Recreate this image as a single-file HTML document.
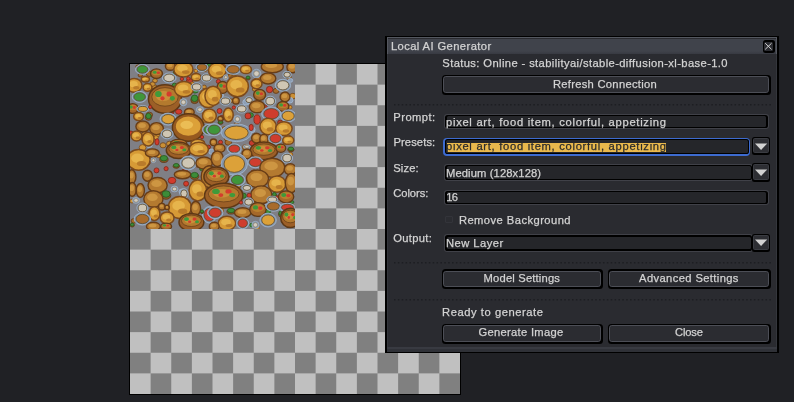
<!DOCTYPE html>
<html lang="en">
<head>
<meta charset="utf-8">
<title>Local AI Generator</title>
<style>
html,body{margin:0;padding:0;}
body{width:794px;height:402px;overflow:hidden;background:#202125;position:relative;font-family:"Liberation Sans","DejaVu Sans",sans-serif;font-size:11.2px;color:#d3d3d3;}
.abs{position:absolute;}
.canvas{left:128.7px;top:62.7px;width:332.6px;height:332.6px;background:#000;}
.checker{left:130px;top:64px;width:330px;height:330px;background-color:#c0c0c0;
 background-image:conic-gradient(#c0c0c0 25%,#808080 0 50%,#c0c0c0 0 75%,#808080 0);background-size:41.25px 41.25px;}
.food{position:absolute;left:130px;top:64px;}
.dlg{left:385.3px;top:36px;width:393.4px;height:317px;background:#000;}
.dlgin{left:386.6px;top:37.3px;width:390.8px;height:314.4px;background:#2a2b30;}
.title{left:386.6px;top:37.3px;width:390.8px;height:16.6px;background:linear-gradient(#40434b 0,#40434b 80%,#383a42 100%);}
.t{filter:grayscale(1);position:absolute;white-space:pre;line-height:14px;height:14px;-webkit-text-stroke:0.25px currentColor;}
.sep{height:1.4px;left:393.5px;width:377.2px;background-image:repeating-linear-gradient(90deg,#1c1d21 0,#1c1d21 1.4px,transparent 1.4px,transparent 3.87px);}
.btn{background:#000;border-radius:3.5px;}
.btn i{position:absolute;left:1.3px;top:1.6px;right:1.3px;bottom:2px;background:#2b2c31;border:1.4px solid #4c4e56;border-radius:2.8px;box-sizing:border-box;}
.btn.dd{border-radius:2.5px}.btn.dd i{left:1.2px;top:1.2px;right:1.2px;bottom:2px;border-radius:1.5px;background:#2d2e33}
.inp{background:#404148;border-radius:3.2px;}
.inp i{position:absolute;left:1.1px;top:1.1px;right:1.1px;bottom:1.1px;background:#000;border-radius:2.6px;}
.inp b{position:absolute;left:2.4px;top:2.4px;right:2.4px;bottom:2.4px;background:#25262a;border-radius:1.5px;}
.inp.focus{background:#3d6bd0;}
</style>
</head>
<body>
<div class="abs canvas"></div>
<div class="abs checker"></div>
<svg class="food" width="165" height="165" viewBox="0 0 165 165">
<rect width="165" height="165" fill="#7f7f85"/>
<ellipse cx="53.4" cy="24.9" rx="2.9" ry="2.5" fill="#c98f36" stroke="#6e431a" stroke-width="0.8"/>
<ellipse cx="135.5" cy="15.5" rx="2.8" ry="2.4" fill="#c63d2e" stroke="#6e2517" stroke-width="0.8"/>
<ellipse cx="35.4" cy="14.2" rx="2.5" ry="2.2" fill="#a56b2b" stroke="#5f3715" stroke-width="0.8"/>
<ellipse cx="15" cy="70" rx="3.2" ry="2.8" fill="#c98f36" stroke="#6e431a" stroke-width="0.8"/>
<ellipse cx="156.3" cy="104.1" rx="2.8" ry="2.4" fill="#c98f36" stroke="#6e431a" stroke-width="0.8"/>
<ellipse cx="95.2" cy="65.5" rx="3.4" ry="3" fill="#c98f36" stroke="#6e431a" stroke-width="0.8"/>
<ellipse cx="91.8" cy="22" rx="2.5" ry="2.2" fill="#c63d2e" stroke="#6e2517" stroke-width="0.8"/>
<ellipse cx="19.4" cy="50.9" rx="3.2" ry="2.7" fill="#a56b2b" stroke="#5f3715" stroke-width="0.8"/>
<ellipse cx="17" cy="94.2" rx="2.1" ry="1.9" fill="#c98f36" stroke="#6e431a" stroke-width="0.8"/>
<ellipse cx="90.4" cy="10.4" rx="1.9" ry="1.7" fill="#a56b2b" stroke="#5f3715" stroke-width="0.8"/>
<ellipse cx="81.9" cy="87.7" rx="3.1" ry="2.7" fill="#8c9db3" stroke="#a3bad4" stroke-width="0.8"/>
<ellipse cx="96.6" cy="74.8" rx="2.3" ry="2" fill="#b07a30" stroke="#6e431a" stroke-width="0.8"/>
<ellipse cx="29.7" cy="128.7" rx="2" ry="1.7" fill="#d69a36" stroke="#7c4a1c" stroke-width="0.8"/>
<ellipse cx="86.7" cy="144.4" rx="3" ry="2.6" fill="#d69a36" stroke="#7c4a1c" stroke-width="0.8"/>
<ellipse cx="100.5" cy="12.1" rx="2.7" ry="2.3" fill="#a56b2b" stroke="#5f3715" stroke-width="0.8"/>
<ellipse cx="124.9" cy="25.1" rx="2.6" ry="2.3" fill="#c98f36" stroke="#6e431a" stroke-width="0.8"/>
<ellipse cx="158.7" cy="12.8" rx="2.7" ry="2.4" fill="#b07a30" stroke="#6e431a" stroke-width="0.8"/>
<ellipse cx="144.5" cy="51.8" rx="3" ry="2.6" fill="#c63d2e" stroke="#6e2517" stroke-width="0.8"/>
<ellipse cx="82" cy="131.5" rx="2" ry="1.7" fill="#c98f36" stroke="#6e431a" stroke-width="0.8"/>
<ellipse cx="155.9" cy="78.2" rx="2.9" ry="2.5" fill="#c98f36" stroke="#6e431a" stroke-width="0.8"/>
<ellipse cx="120.6" cy="51.1" rx="2.8" ry="2.4" fill="#3c8c38" stroke="#27591f" stroke-width="0.8"/>
<ellipse cx="135.6" cy="47" rx="2.5" ry="2.1" fill="#3c8c38" stroke="#27591f" stroke-width="0.8"/>
<ellipse cx="57.3" cy="155.2" rx="2.4" ry="2.1" fill="#c63d2e" stroke="#6e2517" stroke-width="0.8"/>
<ellipse cx="19.3" cy="9.7" rx="3.1" ry="2.7" fill="#a56b2b" stroke="#5f3715" stroke-width="0.8"/>
<ellipse cx="121.8" cy="65.7" rx="3.3" ry="2.9" fill="#8c9db3" stroke="#a3bad4" stroke-width="0.8"/>
<ellipse cx="13.3" cy="74.1" rx="2.7" ry="2.4" fill="#a56b2b" stroke="#5f3715" stroke-width="0.8"/>
<ellipse cx="135.2" cy="142.6" rx="2.3" ry="2" fill="#8c9db3" stroke="#a3bad4" stroke-width="0.8"/>
<ellipse cx="162.8" cy="112.6" rx="2.5" ry="2.1" fill="#a56b2b" stroke="#5f3715" stroke-width="0.8"/>
<ellipse cx="24.9" cy="29.1" rx="2.2" ry="1.9" fill="#a56b2b" stroke="#5f3715" stroke-width="0.8"/>
<ellipse cx="2" cy="137.1" rx="2.1" ry="1.9" fill="#d69a36" stroke="#7c4a1c" stroke-width="0.8"/>
<ellipse cx="0.7" cy="69.1" rx="2.4" ry="2.1" fill="#c63d2e" stroke="#6e2517" stroke-width="0.8"/>
<ellipse cx="52.6" cy="20.7" rx="3.2" ry="2.8" fill="#c63d2e" stroke="#6e2517" stroke-width="0.8"/>
<ellipse cx="108.1" cy="122.1" rx="2.6" ry="2.2" fill="#b07a30" stroke="#6e431a" stroke-width="0.8"/>
<ellipse cx="128.7" cy="144.3" rx="3.1" ry="2.7" fill="#8c9db3" stroke="#a3bad4" stroke-width="0.8"/>
<ellipse cx="65.7" cy="65" rx="2.6" ry="2.3" fill="#8c9db3" stroke="#a3bad4" stroke-width="0.8"/>
<ellipse cx="10.3" cy="11.1" rx="2.2" ry="1.9" fill="#a56b2b" stroke="#5f3715" stroke-width="0.8"/>
<ellipse cx="18.1" cy="99.1" rx="2" ry="1.7" fill="#c63d2e" stroke="#6e2517" stroke-width="0.8"/>
<ellipse cx="25" cy="16.7" rx="2.4" ry="2.1" fill="#c98f36" stroke="#6e431a" stroke-width="0.8"/>
<ellipse cx="11.6" cy="34.3" rx="2.4" ry="2.1" fill="#3c8c38" stroke="#27591f" stroke-width="0.8"/>
<ellipse cx="41.6" cy="57.3" rx="2.4" ry="2.1" fill="#c98f36" stroke="#6e431a" stroke-width="0.8"/>
<ellipse cx="19" cy="80.5" rx="3.4" ry="3" fill="#8c9db3" stroke="#a3bad4" stroke-width="0.8"/>
<ellipse cx="79.8" cy="14.2" rx="2" ry="1.7" fill="#d69a36" stroke="#7c4a1c" stroke-width="0.8"/>
<ellipse cx="122.2" cy="79" rx="3" ry="2.6" fill="#c63d2e" stroke="#6e2517" stroke-width="0.8"/>
<ellipse cx="3.8" cy="156.9" rx="2.7" ry="2.3" fill="#a56b2b" stroke="#5f3715" stroke-width="0.8"/>
<ellipse cx="113.9" cy="150.8" rx="3.1" ry="2.7" fill="#d69a36" stroke="#7c4a1c" stroke-width="0.8"/>
<ellipse cx="161.5" cy="142.4" rx="3" ry="2.6" fill="#d69a36" stroke="#7c4a1c" stroke-width="0.8"/>
<ellipse cx="85.5" cy="149.9" rx="2.4" ry="2.1" fill="#a56b2b" stroke="#5f3715" stroke-width="0.8"/>
<ellipse cx="87.9" cy="128.5" rx="2.4" ry="2.1" fill="#a56b2b" stroke="#5f3715" stroke-width="0.8"/>
<ellipse cx="101.2" cy="130.1" rx="3.1" ry="2.7" fill="#a56b2b" stroke="#5f3715" stroke-width="0.8"/>
<ellipse cx="133" cy="135" rx="3" ry="2.6" fill="#a56b2b" stroke="#5f3715" stroke-width="0.8"/>
<ellipse cx="33" cy="81.3" rx="3" ry="2.6" fill="#c98f36" stroke="#6e431a" stroke-width="0.8"/>
<ellipse cx="130.4" cy="77.9" rx="2.2" ry="1.9" fill="#c63d2e" stroke="#6e2517" stroke-width="0.8"/>
<ellipse cx="157.8" cy="73.8" rx="3.3" ry="2.9" fill="#d69a36" stroke="#7c4a1c" stroke-width="0.8"/>
<ellipse cx="157.6" cy="60.2" rx="2.2" ry="1.9" fill="#a56b2b" stroke="#5f3715" stroke-width="0.8"/>
<ellipse cx="77.6" cy="55.7" rx="2.6" ry="2.3" fill="#c63d2e" stroke="#6e2517" stroke-width="0.8"/>
<ellipse cx="138.7" cy="79.1" rx="2.9" ry="2.5" fill="#b07a30" stroke="#6e431a" stroke-width="0.8"/>
<ellipse cx="106.1" cy="137.7" rx="2" ry="1.8" fill="#8c9db3" stroke="#a3bad4" stroke-width="0.8"/>
<ellipse cx="129.1" cy="123.8" rx="2.6" ry="2.3" fill="#a56b2b" stroke="#5f3715" stroke-width="0.8"/>
<ellipse cx="71.6" cy="104.9" rx="2" ry="1.7" fill="#3c8c38" stroke="#27591f" stroke-width="0.8"/>
<ellipse cx="65.3" cy="66.2" rx="3.4" ry="2.9" fill="#3c8c38" stroke="#27591f" stroke-width="0.8"/>
<ellipse cx="26.2" cy="163.9" rx="1.9" ry="1.6" fill="#c63d2e" stroke="#6e2517" stroke-width="0.8"/>
<ellipse cx="149.3" cy="133.1" rx="2.1" ry="1.8" fill="#b07a30" stroke="#6e431a" stroke-width="0.8"/>
<ellipse cx="98.3" cy="78.3" rx="3.3" ry="2.9" fill="#a56b2b" stroke="#5f3715" stroke-width="0.8"/>
<ellipse cx="90.5" cy="21.6" rx="1.9" ry="1.6" fill="#3c8c38" stroke="#27591f" stroke-width="0.8"/>
<ellipse cx="107.2" cy="86.9" rx="3.3" ry="2.9" fill="#8c9db3" stroke="#a3bad4" stroke-width="0.8"/>
<ellipse cx="162.8" cy="32.1" rx="3.2" ry="2.8" fill="#c98f36" stroke="#6e431a" stroke-width="0.8"/>
<ellipse cx="41.6" cy="48.3" rx="2.2" ry="1.9" fill="#c63d2e" stroke="#6e2517" stroke-width="0.8"/>
<ellipse cx="53.8" cy="89.8" rx="3.2" ry="2.8" fill="#c98f36" stroke="#6e431a" stroke-width="0.8"/>
<ellipse cx="150.2" cy="58.4" rx="2.6" ry="2.2" fill="#c63d2e" stroke="#6e2517" stroke-width="0.8"/>
<ellipse cx="134.5" cy="85.3" rx="3.2" ry="2.8" fill="#c63d2e" stroke="#6e2517" stroke-width="0.8"/>
<ellipse cx="21.6" cy="25.1" rx="2.7" ry="2.3" fill="#b07a30" stroke="#6e431a" stroke-width="0.8"/>
<ellipse cx="72.6" cy="30.2" rx="1.8" ry="1.6" fill="#b07a30" stroke="#6e431a" stroke-width="0.8"/>
<ellipse cx="24.7" cy="23.4" rx="2.8" ry="2.5" fill="#c98f36" stroke="#6e431a" stroke-width="0.8"/>
<ellipse cx="91.8" cy="53.8" rx="2.7" ry="2.3" fill="#c63d2e" stroke="#6e2517" stroke-width="0.8"/>
<ellipse cx="79.6" cy="128.1" rx="3.3" ry="2.8" fill="#c98f36" stroke="#6e431a" stroke-width="0.8"/>
<ellipse cx="41" cy="45.7" rx="3.1" ry="2.7" fill="#c63d2e" stroke="#6e2517" stroke-width="0.8"/>
<ellipse cx="74.6" cy="4.6" rx="3.3" ry="2.9" fill="#c98f36" stroke="#6e431a" stroke-width="0.8"/>
<ellipse cx="73.1" cy="101.1" rx="2.7" ry="2.3" fill="#c63d2e" stroke="#6e2517" stroke-width="0.8"/>
<ellipse cx="32.9" cy="45.7" rx="2.7" ry="2.3" fill="#b07a30" stroke="#6e431a" stroke-width="0.8"/>
<ellipse cx="78.9" cy="155.3" rx="3" ry="2.6" fill="#d69a36" stroke="#7c4a1c" stroke-width="0.8"/>
<ellipse cx="152.3" cy="147.3" rx="2.2" ry="1.9" fill="#8c9db3" stroke="#a3bad4" stroke-width="0.8"/>
<ellipse cx="22.6" cy="20.1" rx="2.6" ry="2.2" fill="#c98f36" stroke="#6e431a" stroke-width="0.8"/>
<ellipse cx="110.7" cy="70.7" rx="2.2" ry="1.9" fill="#d69a36" stroke="#7c4a1c" stroke-width="0.8"/>
<ellipse cx="129.3" cy="148" rx="2.1" ry="1.8" fill="#3c8c38" stroke="#27591f" stroke-width="0.8"/>
<ellipse cx="106.2" cy="60.4" rx="2.2" ry="2" fill="#a56b2b" stroke="#5f3715" stroke-width="0.8"/>
<ellipse cx="159.6" cy="36.2" rx="3.4" ry="2.9" fill="#8c9db3" stroke="#a3bad4" stroke-width="0.8"/>
<ellipse cx="146" cy="26.9" rx="2.9" ry="2.5" fill="#a56b2b" stroke="#5f3715" stroke-width="0.8"/>
<ellipse cx="26.6" cy="71.2" rx="2.7" ry="2.3" fill="#d69a36" stroke="#7c4a1c" stroke-width="0.8"/>
<ellipse cx="69.5" cy="58.8" rx="2" ry="1.7" fill="#d69a36" stroke="#7c4a1c" stroke-width="0.8"/>
<ellipse cx="3.2" cy="91.4" rx="2.5" ry="2.2" fill="#c98f36" stroke="#6e431a" stroke-width="0.8"/>
<ellipse cx="63.4" cy="85.4" rx="2.3" ry="2" fill="#c98f36" stroke="#6e431a" stroke-width="0.8"/>
<ellipse cx="18.6" cy="151.6" rx="2.2" ry="1.9" fill="#c98f36" stroke="#6e431a" stroke-width="0.8"/>
<ellipse cx="13.9" cy="44.9" rx="3.3" ry="2.9" fill="#a56b2b" stroke="#5f3715" stroke-width="0.8"/>
<ellipse cx="44.6" cy="21.4" rx="2.5" ry="2.2" fill="#3c8c38" stroke="#27591f" stroke-width="0.8"/>
<ellipse cx="135.1" cy="42.7" rx="2.1" ry="1.8" fill="#c63d2e" stroke="#6e2517" stroke-width="0.8"/>
<ellipse cx="94.1" cy="115.6" rx="2" ry="1.7" fill="#c98f36" stroke="#6e431a" stroke-width="0.8"/>
<ellipse cx="131.9" cy="30.3" rx="3.3" ry="2.9" fill="#d69a36" stroke="#7c4a1c" stroke-width="0.8"/>
<ellipse cx="154.8" cy="104.7" rx="3.1" ry="2.7" fill="#c98f36" stroke="#6e431a" stroke-width="0.8"/>
<ellipse cx="100.3" cy="36.7" rx="2.3" ry="2" fill="#c98f36" stroke="#6e431a" stroke-width="0.8"/>
<ellipse cx="74.9" cy="56" rx="2.7" ry="2.4" fill="#d69a36" stroke="#7c4a1c" stroke-width="0.8"/>
<ellipse cx="102.6" cy="7.1" rx="3" ry="2.6" fill="#c98f36" stroke="#6e431a" stroke-width="0.8"/>
<ellipse cx="159.9" cy="43.2" rx="2.1" ry="1.9" fill="#d69a36" stroke="#7c4a1c" stroke-width="0.8"/>
<ellipse cx="103.7" cy="87.6" rx="2.2" ry="1.9" fill="#8c9db3" stroke="#a3bad4" stroke-width="0.8"/>
<ellipse cx="82.5" cy="29.4" rx="2.4" ry="2.1" fill="#c98f36" stroke="#6e431a" stroke-width="0.8"/>
<ellipse cx="164.1" cy="6.1" rx="1.9" ry="1.6" fill="#c63d2e" stroke="#6e2517" stroke-width="0.8"/>
<ellipse cx="90.9" cy="31.3" rx="2.6" ry="2.3" fill="#8c9db3" stroke="#a3bad4" stroke-width="0.8"/>
<ellipse cx="17.5" cy="135.1" rx="2.5" ry="2.2" fill="#8c9db3" stroke="#a3bad4" stroke-width="0.8"/>
<ellipse cx="90.1" cy="146.6" rx="3.4" ry="3" fill="#d69a36" stroke="#7c4a1c" stroke-width="0.8"/>
<ellipse cx="113.5" cy="162.1" rx="2.4" ry="2.1" fill="#b07a30" stroke="#6e431a" stroke-width="0.8"/>
<ellipse cx="145.5" cy="120.3" rx="2.1" ry="1.8" fill="#d69a36" stroke="#7c4a1c" stroke-width="0.8"/>
<ellipse cx="162" cy="138.1" rx="1.9" ry="1.6" fill="#3c8c38" stroke="#27591f" stroke-width="0.8"/>
<ellipse cx="122.2" cy="42.2" rx="2.1" ry="1.8" fill="#c98f36" stroke="#6e431a" stroke-width="0.8"/>
<ellipse cx="109.8" cy="62.8" rx="2.7" ry="2.3" fill="#d69a36" stroke="#7c4a1c" stroke-width="0.8"/>
<ellipse cx="98.8" cy="114.3" rx="1.9" ry="1.7" fill="#a56b2b" stroke="#5f3715" stroke-width="0.8"/>
<ellipse cx="26" cy="73.6" rx="2.3" ry="2" fill="#d69a36" stroke="#7c4a1c" stroke-width="0.8"/>
<ellipse cx="160.5" cy="90.3" rx="2.2" ry="1.9" fill="#d69a36" stroke="#7c4a1c" stroke-width="0.8"/>
<ellipse cx="35.9" cy="30.2" rx="2.4" ry="2.1" fill="#c98f36" stroke="#6e431a" stroke-width="0.8"/>
<ellipse cx="78.3" cy="83" rx="2.2" ry="1.9" fill="#c63d2e" stroke="#6e2517" stroke-width="0.8"/>
<ellipse cx="128.1" cy="15" rx="3.2" ry="2.7" fill="#a56b2b" stroke="#5f3715" stroke-width="0.8"/>
<ellipse cx="65.9" cy="6.9" rx="1.9" ry="1.6" fill="#d69a36" stroke="#7c4a1c" stroke-width="0.8"/>
<ellipse cx="103.9" cy="13.9" rx="3.4" ry="2.9" fill="#b07a30" stroke="#6e431a" stroke-width="0.8"/>
<ellipse cx="123.8" cy="108.5" rx="3" ry="2.6" fill="#c63d2e" stroke="#6e2517" stroke-width="0.8"/>
<ellipse cx="64.3" cy="53.8" rx="3.4" ry="3" fill="#a56b2b" stroke="#5f3715" stroke-width="0.8"/>
<ellipse cx="46.9" cy="102.1" rx="2.1" ry="1.8" fill="#b07a30" stroke="#6e431a" stroke-width="0.8"/>
<ellipse cx="137.8" cy="147.2" rx="2.9" ry="2.5" fill="#3c8c38" stroke="#27591f" stroke-width="0.8"/>
<ellipse cx="115.7" cy="83.4" rx="3.3" ry="2.9" fill="#b07a30" stroke="#6e431a" stroke-width="0.8"/>
<ellipse cx="83.2" cy="137.8" rx="3.1" ry="2.7" fill="#b07a30" stroke="#6e431a" stroke-width="0.8"/>
<ellipse cx="113.3" cy="131.7" rx="3" ry="2.6" fill="#3c8c38" stroke="#27591f" stroke-width="0.8"/>
<ellipse cx="106.1" cy="14" rx="1.9" ry="1.7" fill="#3c8c38" stroke="#27591f" stroke-width="0.8"/>
<ellipse cx="59.5" cy="17.3" rx="3.2" ry="2.8" fill="#c63d2e" stroke="#6e2517" stroke-width="0.8"/>
<ellipse cx="8.4" cy="3.1" rx="2.7" ry="2.3" fill="#a56b2b" stroke="#5f3715" stroke-width="0.8"/>
<ellipse cx="80.7" cy="0.5" rx="3.1" ry="2.7" fill="#3c8c38" stroke="#27591f" stroke-width="0.8"/>
<ellipse cx="153.9" cy="148.1" rx="2" ry="1.7" fill="#c63d2e" stroke="#6e2517" stroke-width="0.8"/>
<ellipse cx="10.9" cy="121.6" rx="2.2" ry="2" fill="#c98f36" stroke="#6e431a" stroke-width="0.8"/>
<ellipse cx="139.6" cy="38.7" rx="3.1" ry="2.7" fill="#a56b2b" stroke="#5f3715" stroke-width="0.8"/>
<ellipse cx="122.1" cy="161" rx="2.6" ry="2.3" fill="#8c9db3" stroke="#a3bad4" stroke-width="0.8"/>
<ellipse cx="12.7" cy="150.2" rx="2.3" ry="2" fill="#c98f36" stroke="#6e431a" stroke-width="0.8"/>
<ellipse cx="101.8" cy="106.1" rx="2" ry="1.7" fill="#a56b2b" stroke="#5f3715" stroke-width="0.8"/>
<ellipse cx="54.7" cy="107.5" rx="3" ry="2.6" fill="#c63d2e" stroke="#6e2517" stroke-width="0.8"/>
<ellipse cx="93.7" cy="2.1" rx="1.9" ry="1.7" fill="#d69a36" stroke="#7c4a1c" stroke-width="0.8"/>
<ellipse cx="160.5" cy="16.4" rx="2.2" ry="1.9" fill="#8c9db3" stroke="#a3bad4" stroke-width="0.8"/>
<ellipse cx="48" cy="85.2" rx="2.6" ry="2.3" fill="#8c9db3" stroke="#a3bad4" stroke-width="0.8"/>
<ellipse cx="126.6" cy="163.9" rx="2.7" ry="2.4" fill="#d69a36" stroke="#7c4a1c" stroke-width="0.8"/>
<ellipse cx="161.4" cy="154.5" rx="1.9" ry="1.6" fill="#8c9db3" stroke="#a3bad4" stroke-width="0.8"/>
<ellipse cx="12.6" cy="83.6" rx="3.4" ry="3" fill="#d69a36" stroke="#7c4a1c" stroke-width="0.8"/>
<ellipse cx="63.8" cy="151.2" rx="3.3" ry="2.9" fill="#c98f36" stroke="#6e431a" stroke-width="0.8"/>
<ellipse cx="95.9" cy="23.4" rx="2.7" ry="2.3" fill="#d69a36" stroke="#7c4a1c" stroke-width="0.8"/>
<ellipse cx="21.9" cy="135.3" rx="2.7" ry="2.3" fill="#c98f36" stroke="#6e431a" stroke-width="0.8"/>
<ellipse cx="116.1" cy="38.2" rx="3.3" ry="2.9" fill="#8c9db3" stroke="#a3bad4" stroke-width="0.8"/>
<ellipse cx="65" cy="26.2" rx="3.4" ry="2.9" fill="#3c8c38" stroke="#27591f" stroke-width="0.8"/>
<ellipse cx="74.4" cy="49.8" rx="2.1" ry="1.8" fill="#d69a36" stroke="#7c4a1c" stroke-width="0.8"/>
<ellipse cx="62.1" cy="20" rx="2.4" ry="2.1" fill="#d69a36" stroke="#7c4a1c" stroke-width="0.8"/>
<ellipse cx="123.9" cy="138.5" rx="2" ry="1.8" fill="#a56b2b" stroke="#5f3715" stroke-width="0.8"/>
<ellipse cx="117.6" cy="148.8" rx="2.3" ry="2" fill="#d69a36" stroke="#7c4a1c" stroke-width="0.8"/>
<ellipse cx="10.7" cy="64.4" rx="3.2" ry="2.8" fill="#c98f36" stroke="#6e431a" stroke-width="0.8"/>
<ellipse cx="59.5" cy="70.6" rx="2.3" ry="2" fill="#c98f36" stroke="#6e431a" stroke-width="0.8"/>
<ellipse cx="46.3" cy="8.5" rx="2.9" ry="2.5" fill="#3c8c38" stroke="#27591f" stroke-width="0.8"/>
<ellipse cx="154.4" cy="41.1" rx="2.3" ry="2" fill="#c63d2e" stroke="#6e2517" stroke-width="0.8"/>
<ellipse cx="52.1" cy="127.6" rx="3.1" ry="2.7" fill="#8c9db3" stroke="#a3bad4" stroke-width="0.8"/>
<ellipse cx="145.9" cy="134" rx="2.9" ry="2.5" fill="#c63d2e" stroke="#6e2517" stroke-width="0.8"/>
<ellipse cx="90.6" cy="118.7" rx="1.9" ry="1.7" fill="#3c8c38" stroke="#27591f" stroke-width="0.8"/>
<ellipse cx="67.8" cy="101.5" rx="2.1" ry="1.8" fill="#b07a30" stroke="#6e431a" stroke-width="0.8"/>
<ellipse cx="47.2" cy="8.1" rx="3.3" ry="2.9" fill="#a56b2b" stroke="#5f3715" stroke-width="0.8"/>
<ellipse cx="28.2" cy="68.5" rx="2.3" ry="2" fill="#d69a36" stroke="#7c4a1c" stroke-width="0.8"/>
<ellipse cx="121.9" cy="161.1" rx="2.3" ry="2" fill="#3c8c38" stroke="#27591f" stroke-width="0.8"/>
<ellipse cx="39.4" cy="79.7" rx="2.9" ry="2.5" fill="#c98f36" stroke="#6e431a" stroke-width="0.8"/>
<ellipse cx="27.6" cy="26.7" rx="2.2" ry="1.9" fill="#b07a30" stroke="#6e431a" stroke-width="0.8"/>
<ellipse cx="82" cy="36.3" rx="3.3" ry="2.9" fill="#b07a30" stroke="#6e431a" stroke-width="0.8"/>
<ellipse cx="74.2" cy="23" rx="2.1" ry="1.9" fill="#c98f36" stroke="#6e431a" stroke-width="0.8"/>
<ellipse cx="28.8" cy="91.7" rx="2.4" ry="2" fill="#d69a36" stroke="#7c4a1c" stroke-width="0.8"/>
<ellipse cx="12.4" cy="5.4" rx="6.9" ry="4.9" fill="#8595aa" stroke="#9db3cc" stroke-width="0.9"/>
<ellipse cx="12.4" cy="5.4" rx="5.4" ry="3.8" fill="#3f963a" stroke="#5b4a30" stroke-width="0.8"/>
<ellipse cx="26.5" cy="9.6" rx="6" ry="4.7" fill="#a5682a" stroke="#603a17" stroke-width="1.3"/>
<ellipse cx="26.5" cy="8.7" rx="4.5" ry="2.6" fill="#b9802f"/>
<ellipse cx="24.7" cy="8.2" rx="1.9" ry="1.5" fill="#3f9a3a"/>
<ellipse cx="28.4" cy="8.7" rx="1.7" ry="1.3" fill="#d43c2d"/>
<ellipse cx="40.3" cy="2.2" rx="4.9" ry="4.1" fill="#b47a30" stroke="#683d17" stroke-width="1.4"/>
<ellipse cx="39.8" cy="1.4" rx="2.7" ry="1.9" fill="#cd9642"/>
<ellipse cx="53.4" cy="5.4" rx="9.6" ry="7.7" fill="#d69a36" stroke="#7c4a1c" stroke-width="1.5"/>
<ellipse cx="52.4" cy="4.2" rx="5.3" ry="3.5" fill="#e6b44c"/>
<ellipse cx="55.8" cy="8.1" rx="3.8" ry="1.9" fill="#b97b2a"/>
<ellipse cx="72" cy="3.3" rx="6" ry="4.1" fill="#8595aa" stroke="#9db3cc" stroke-width="0.9"/>
<ellipse cx="72" cy="3.3" rx="4.7" ry="3.1" fill="#a86b2b" stroke="#5b4a30" stroke-width="0.8"/>
<ellipse cx="39.2" cy="13.9" rx="6.9" ry="4.9" fill="#8595aa" stroke="#9db3cc" stroke-width="0.9"/>
<ellipse cx="39.2" cy="13.9" rx="5.4" ry="3.8" fill="#cfc6b4" stroke="#5b4a30" stroke-width="0.8"/>
<ellipse cx="51.9" cy="14.9" rx="1.7" ry="1.7" fill="#d23b2c" stroke="#7a2a1a" stroke-width="0.8"/>
<ellipse cx="58.3" cy="14.5" rx="1.7" ry="1.7" fill="#d23b2c" stroke="#7a2a1a" stroke-width="0.8"/>
<ellipse cx="66.1" cy="13.2" rx="4.9" ry="3.6" fill="#d69a36" stroke="#7c4a1c" stroke-width="1.5"/>
<ellipse cx="65.6" cy="12.7" rx="2.7" ry="1.6" fill="#e6b44c"/>
<ellipse cx="67.3" cy="14.5" rx="2" ry="0.9" fill="#b97b2a"/>
<ellipse cx="76.6" cy="13.9" rx="5.5" ry="4.1" fill="#8595aa" stroke="#9db3cc" stroke-width="0.9"/>
<ellipse cx="76.6" cy="13.9" rx="4.3" ry="3.1" fill="#cfc6b4" stroke="#5b4a30" stroke-width="0.8"/>
<ellipse cx="4.3" cy="21.3" rx="7.7" ry="6.9" fill="#d69a36" stroke="#7c4a1c" stroke-width="1.5"/>
<ellipse cx="3.6" cy="20.2" rx="4.2" ry="3.1" fill="#e6b44c"/>
<ellipse cx="6.3" cy="23.7" rx="3.1" ry="1.7" fill="#b97b2a"/>
<ellipse cx="15.3" cy="15.3" rx="4.1" ry="2.7" fill="#d69a36" stroke="#7c4a1c" stroke-width="1.5"/>
<ellipse cx="14.9" cy="14.9" rx="2.3" ry="1.2" fill="#e6b44c"/>
<ellipse cx="16.4" cy="16.3" rx="1.6" ry="0.7" fill="#b97b2a"/>
<ellipse cx="17.5" cy="23.4" rx="4.4" ry="3.8" fill="#d69a36" stroke="#7c4a1c" stroke-width="1.5"/>
<ellipse cx="17" cy="22.8" rx="2.4" ry="1.7" fill="#e6b44c"/>
<ellipse cx="18.5" cy="24.7" rx="1.8" ry="1" fill="#b97b2a"/>
<ellipse cx="35" cy="35" rx="16.5" ry="14.3" fill="#9c5f27" stroke="#5e3815" stroke-width="1.5"/>
<ellipse cx="35" cy="32.9" rx="13.2" ry="9.3" fill="#b47a2e" stroke="#6b4019" stroke-width="0.8"/>
<ellipse cx="33.3" cy="32.1" rx="7.4" ry="5" fill="#c98f3a"/>
<ellipse cx="28.4" cy="30" rx="3.3" ry="3.1" fill="#3f9a3a"/>
<ellipse cx="39.1" cy="30" rx="2.6" ry="2.6" fill="#d43c2d"/>
<ellipse cx="42.4" cy="34.3" rx="2.5" ry="2.4" fill="#3f9a3a"/>
<ellipse cx="32.5" cy="34.3" rx="2.1" ry="2.1" fill="#d43c2d"/>
<ellipse cx="54" cy="25.1" rx="9.6" ry="7.7" fill="#d69a36" stroke="#7c4a1c" stroke-width="1.5"/>
<ellipse cx="53.1" cy="23.9" rx="5.3" ry="3.5" fill="#e6b44c"/>
<ellipse cx="56.4" cy="27.8" rx="3.8" ry="1.9" fill="#b97b2a"/>
<ellipse cx="66.7" cy="22.9" rx="5.5" ry="4.1" fill="#8595aa" stroke="#9db3cc" stroke-width="0.9"/>
<ellipse cx="66.7" cy="22.9" rx="4.3" ry="3.1" fill="#cfc6b4" stroke="#5b4a30" stroke-width="0.8"/>
<ellipse cx="9.6" cy="32.9" rx="7.4" ry="5.5" fill="#8595aa" stroke="#9db3cc" stroke-width="0.9"/>
<ellipse cx="9.6" cy="32.9" rx="5.8" ry="4.2" fill="#3f963a" stroke="#5b4a30" stroke-width="0.8"/>
<ellipse cx="64.6" cy="35.9" rx="3.8" ry="3.7" fill="#8a5a26" stroke="#5a3515" stroke-width="0.8"/>
<ellipse cx="64.6" cy="34.3" rx="3.2" ry="3.3" fill="#3c8c38" stroke="#27591f" stroke-width="0.8"/>
<ellipse cx="78.3" cy="33.9" rx="9.6" ry="9.6" fill="#d69a36" stroke="#7c4a1c" stroke-width="1.5"/>
<ellipse cx="77.4" cy="32.5" rx="5.3" ry="4.3" fill="#e6b44c"/>
<ellipse cx="80.7" cy="37.3" rx="3.8" ry="2.4" fill="#b97b2a"/>
<ellipse cx="53.4" cy="38.2" rx="3.6" ry="3.6" fill="#8797ab" stroke="#9fb4cc" stroke-width="0.7"/>
<ellipse cx="53.4" cy="38.2" rx="2.2" ry="2.2" fill="#d2ccc0" stroke="#8a7a60" stroke-width="0.6"/>
<ellipse cx="2.7" cy="44.5" rx="5.5" ry="4.9" fill="#a5682a" stroke="#603a17" stroke-width="1.3"/>
<ellipse cx="2.7" cy="43.5" rx="4.1" ry="2.7" fill="#b9802f"/>
<ellipse cx="1" cy="43" rx="1.8" ry="1.6" fill="#3f9a3a"/>
<ellipse cx="4.3" cy="43.5" rx="1.5" ry="1.4" fill="#d43c2d"/>
<ellipse cx="12.8" cy="44.9" rx="6" ry="3.3" fill="#8595aa" stroke="#9db3cc" stroke-width="0.9"/>
<ellipse cx="12.8" cy="44.9" rx="4.7" ry="2.5" fill="#dca139" stroke="#5b4a30" stroke-width="0.8"/>
<ellipse cx="20.2" cy="43" rx="1.7" ry="1.7" fill="#d23b2c" stroke="#7a2a1a" stroke-width="0.8"/>
<ellipse cx="18.5" cy="53.3" rx="3.2" ry="3" fill="#8a5a26" stroke="#5a3515" stroke-width="0.8"/>
<ellipse cx="18.5" cy="52" rx="2.7" ry="2.7" fill="#3c8c38" stroke="#27591f" stroke-width="0.8"/>
<ellipse cx="8.6" cy="52.5" rx="4.9" ry="4.1" fill="#d69a36" stroke="#7c4a1c" stroke-width="1.5"/>
<ellipse cx="8.1" cy="51.9" rx="2.7" ry="1.9" fill="#e6b44c"/>
<ellipse cx="9.8" cy="54" rx="2" ry="1" fill="#b97b2a"/>
<ellipse cx="48.7" cy="47.7" rx="3.2" ry="2.5" fill="#d23b2c" stroke="#7a2a1a" stroke-width="0.8"/>
<ellipse cx="59.3" cy="48.3" rx="4.9" ry="3.8" fill="#b47a30" stroke="#683d17" stroke-width="1.4"/>
<ellipse cx="58.8" cy="47.5" rx="2.7" ry="1.7" fill="#cd9642"/>
<ellipse cx="69.9" cy="45.6" rx="3.6" ry="2.9" fill="#8797ab" stroke="#9fb4cc" stroke-width="0.7"/>
<ellipse cx="69.9" cy="45.6" rx="2.2" ry="1.8" fill="#d2ccc0" stroke="#8a7a60" stroke-width="0.6"/>
<ellipse cx="79.4" cy="51.9" rx="6.9" ry="6.9" fill="#d69a36" stroke="#7c4a1c" stroke-width="1.5"/>
<ellipse cx="78.7" cy="50.9" rx="3.8" ry="3.1" fill="#e6b44c"/>
<ellipse cx="81.1" cy="54.3" rx="2.7" ry="1.7" fill="#b97b2a"/>
<ellipse cx="38.2" cy="55.1" rx="8.2" ry="6" fill="#8595aa" stroke="#9db3cc" stroke-width="0.9"/>
<ellipse cx="38.2" cy="55.1" rx="6.4" ry="4.6" fill="#dca139" stroke="#5b4a30" stroke-width="0.8"/>
<ellipse cx="12.8" cy="62.5" rx="6.9" ry="5.5" fill="#b47a30" stroke="#683d17" stroke-width="1.4"/>
<ellipse cx="12.1" cy="61.4" rx="3.8" ry="2.5" fill="#cd9642"/>
<ellipse cx="26.5" cy="64.6" rx="6.9" ry="6" fill="#b47a30" stroke="#683d17" stroke-width="1.4"/>
<ellipse cx="25.9" cy="63.4" rx="3.8" ry="2.7" fill="#cd9642"/>
<ellipse cx="58.3" cy="63.5" rx="15.9" ry="13.7" fill="#96591f" stroke="#5e3815" stroke-width="1.4"/>
<ellipse cx="58.3" cy="62.2" rx="12.4" ry="9.6" fill="#dca139"/>
<ellipse cx="56.7" cy="60.8" rx="6.4" ry="4.1" fill="#ebbd55"/>
<ellipse cx="37.1" cy="69.9" rx="6" ry="4.9" fill="#8595aa" stroke="#9db3cc" stroke-width="0.9"/>
<ellipse cx="37.1" cy="69.9" rx="4.7" ry="3.8" fill="#cfc6b4" stroke="#5b4a30" stroke-width="0.8"/>
<ellipse cx="79.4" cy="65.7" rx="6.9" ry="5.5" fill="#8595aa" stroke="#9db3cc" stroke-width="0.9"/>
<ellipse cx="79.4" cy="65.7" rx="5.4" ry="4.2" fill="#3f963a" stroke="#5b4a30" stroke-width="0.8"/>
<ellipse cx="6.5" cy="72" rx="5.5" ry="4.9" fill="#d69a36" stroke="#7c4a1c" stroke-width="1.5"/>
<ellipse cx="5.9" cy="71.3" rx="3" ry="2.2" fill="#e6b44c"/>
<ellipse cx="7.8" cy="73.7" rx="2.2" ry="1.2" fill="#b97b2a"/>
<ellipse cx="18.1" cy="75.2" rx="6" ry="6.9" fill="#d69a36" stroke="#7c4a1c" stroke-width="1.5"/>
<ellipse cx="17.5" cy="74.1" rx="3.3" ry="3.1" fill="#e6b44c"/>
<ellipse cx="19.6" cy="77.6" rx="2.4" ry="1.7" fill="#b97b2a"/>
<ellipse cx="27" cy="77.9" rx="2.1" ry="3.2" fill="#d23b2c" stroke="#7a2a1a" stroke-width="0.8"/>
<ellipse cx="48.7" cy="79.4" rx="8.2" ry="4.1" fill="#a5682a" stroke="#603a17" stroke-width="1.3"/>
<ellipse cx="48.7" cy="78.6" rx="6.2" ry="2.3" fill="#b9802f"/>
<ellipse cx="46.3" cy="78.2" rx="2.6" ry="1.3" fill="#3f9a3a"/>
<ellipse cx="51.2" cy="78.6" rx="2.3" ry="1.2" fill="#d43c2d"/>
<ellipse cx="72" cy="73.1" rx="1.7" ry="1.7" fill="#d23b2c" stroke="#7a2a1a" stroke-width="0.8"/>
<ellipse cx="67.8" cy="79.4" rx="6.9" ry="4.1" fill="#d69a36" stroke="#7c4a1c" stroke-width="1.5"/>
<ellipse cx="67.1" cy="78.8" rx="3.8" ry="1.9" fill="#e6b44c"/>
<ellipse cx="69.5" cy="80.8" rx="2.7" ry="1" fill="#b97b2a"/>
<ellipse cx="87.3" cy="6.5" rx="8.8" ry="7.7" fill="#d69a36" stroke="#7c4a1c" stroke-width="1.5"/>
<ellipse cx="86.5" cy="5.3" rx="4.8" ry="3.5" fill="#e6b44c"/>
<ellipse cx="89.5" cy="9.2" rx="3.5" ry="1.9" fill="#b97b2a"/>
<ellipse cx="103.2" cy="5.4" rx="7.7" ry="4.9" fill="#8595aa" stroke="#9db3cc" stroke-width="0.9"/>
<ellipse cx="103.2" cy="5.4" rx="6" ry="3.8" fill="#a86b2b" stroke="#5b4a30" stroke-width="0.8"/>
<ellipse cx="115.9" cy="5.4" rx="5.5" ry="4.1" fill="#d69a36" stroke="#7c4a1c" stroke-width="1.5"/>
<ellipse cx="115.3" cy="4.8" rx="3" ry="1.9" fill="#e6b44c"/>
<ellipse cx="117.3" cy="6.8" rx="2.2" ry="1" fill="#b97b2a"/>
<ellipse cx="142.3" cy="2.7" rx="11" ry="6" fill="#b47a30" stroke="#683d17" stroke-width="1.4"/>
<ellipse cx="141.2" cy="1.4" rx="6" ry="2.7" fill="#cd9642"/>
<ellipse cx="126.5" cy="9.6" rx="4.4" ry="4.4" fill="#8797ab" stroke="#9fb4cc" stroke-width="0.7"/>
<ellipse cx="126.5" cy="9.6" rx="2.7" ry="2.7" fill="#d2ccc0" stroke="#8a7a60" stroke-width="0.6"/>
<ellipse cx="162.4" cy="3.3" rx="5.5" ry="5.5" fill="#b47a30" stroke="#683d17" stroke-width="1.4"/>
<ellipse cx="161.8" cy="2.2" rx="3" ry="2.5" fill="#cd9642"/>
<ellipse cx="138.1" cy="14.5" rx="7.7" ry="5.5" fill="#b47a30" stroke="#683d17" stroke-width="1.4"/>
<ellipse cx="137.3" cy="13.4" rx="4.2" ry="2.5" fill="#cd9642"/>
<ellipse cx="157.1" cy="10.7" rx="4.1" ry="3.3" fill="#8595aa" stroke="#9db3cc" stroke-width="0.9"/>
<ellipse cx="157.1" cy="10.7" rx="3.2" ry="2.5" fill="#cfc6b4" stroke="#5b4a30" stroke-width="0.8"/>
<ellipse cx="95.8" cy="13.2" rx="2.4" ry="2.4" fill="#8797ab" stroke="#9fb4cc" stroke-width="0.7"/>
<ellipse cx="95.8" cy="13.2" rx="1.5" ry="1.5" fill="#d2ccc0" stroke="#8a7a60" stroke-width="0.6"/>
<ellipse cx="88.4" cy="17.5" rx="2.1" ry="2.1" fill="#d23b2c" stroke="#7a2a1a" stroke-width="0.8"/>
<ellipse cx="92.6" cy="23.4" rx="5.5" ry="6" fill="#a5682a" stroke="#603a17" stroke-width="1.3"/>
<ellipse cx="92.6" cy="22.2" rx="4.1" ry="3.3" fill="#b9802f"/>
<ellipse cx="91" cy="21.6" rx="1.8" ry="1.9" fill="#3f9a3a"/>
<ellipse cx="94.3" cy="22.2" rx="1.5" ry="1.7" fill="#d43c2d"/>
<ellipse cx="107.4" cy="22.3" rx="11" ry="10.4" fill="#d69a36" stroke="#7c4a1c" stroke-width="1.5"/>
<ellipse cx="106.3" cy="20.7" rx="6" ry="4.7" fill="#e6b44c"/>
<ellipse cx="110.2" cy="26" rx="4.4" ry="2.6" fill="#b97b2a"/>
<ellipse cx="126.5" cy="19.8" rx="5.5" ry="4.9" fill="#d69a36" stroke="#7c4a1c" stroke-width="1.5"/>
<ellipse cx="125.9" cy="19" rx="3" ry="2.2" fill="#e6b44c"/>
<ellipse cx="127.8" cy="21.5" rx="2.2" ry="1.2" fill="#b97b2a"/>
<ellipse cx="118" cy="14.3" rx="2.1" ry="1.7" fill="#8a5a26" stroke="#5a3515" stroke-width="0.8"/>
<ellipse cx="118" cy="13.5" rx="1.8" ry="1.5" fill="#3c8c38" stroke="#27591f" stroke-width="0.8"/>
<ellipse cx="152.9" cy="21.3" rx="7.7" ry="6" fill="#8595aa" stroke="#9db3cc" stroke-width="0.9"/>
<ellipse cx="152.9" cy="21.3" rx="6" ry="4.6" fill="#cfc6b4" stroke="#5b4a30" stroke-width="0.8"/>
<ellipse cx="139.6" cy="25.5" rx="3.2" ry="3.2" fill="#d23b2c" stroke="#7a2a1a" stroke-width="0.8"/>
<ellipse cx="83.1" cy="31.8" rx="8.2" ry="9.6" fill="#d69a36" stroke="#7c4a1c" stroke-width="1.5"/>
<ellipse cx="82.3" cy="30.4" rx="4.5" ry="4.3" fill="#e6b44c"/>
<ellipse cx="85.2" cy="35.2" rx="3.3" ry="2.4" fill="#b97b2a"/>
<ellipse cx="129.6" cy="30.8" rx="6" ry="5.5" fill="#a5682a" stroke="#603a17" stroke-width="1.3"/>
<ellipse cx="129.6" cy="29.7" rx="4.5" ry="3" fill="#b9802f"/>
<ellipse cx="127.8" cy="29.1" rx="1.9" ry="1.8" fill="#3f9a3a"/>
<ellipse cx="131.4" cy="29.7" rx="1.7" ry="1.5" fill="#d43c2d"/>
<ellipse cx="155" cy="32.9" rx="4.9" ry="4.9" fill="#b47a30" stroke="#683d17" stroke-width="1.4"/>
<ellipse cx="154.5" cy="31.9" rx="2.7" ry="2.2" fill="#cd9642"/>
<ellipse cx="95.4" cy="37.1" rx="5.5" ry="4.1" fill="#8595aa" stroke="#9db3cc" stroke-width="0.9"/>
<ellipse cx="95.4" cy="37.1" rx="4.3" ry="3.1" fill="#cfc6b4" stroke="#5b4a30" stroke-width="0.8"/>
<ellipse cx="105.9" cy="36.7" rx="3.3" ry="3.3" fill="#b47a30" stroke="#683d17" stroke-width="1.4"/>
<ellipse cx="105.6" cy="36" rx="1.8" ry="1.5" fill="#cd9642"/>
<ellipse cx="119.1" cy="36.1" rx="4.1" ry="3.3" fill="#8595aa" stroke="#9db3cc" stroke-width="0.9"/>
<ellipse cx="119.1" cy="36.1" rx="3.2" ry="2.5" fill="#cfc6b4" stroke="#5b4a30" stroke-width="0.8"/>
<ellipse cx="140.2" cy="37.1" rx="5.5" ry="4.9" fill="#8595aa" stroke="#9db3cc" stroke-width="0.9"/>
<ellipse cx="140.2" cy="37.1" rx="4.3" ry="3.8" fill="#cfc6b4" stroke="#5b4a30" stroke-width="0.8"/>
<ellipse cx="127.1" cy="42.8" rx="7.7" ry="6" fill="#b47a30" stroke="#683d17" stroke-width="1.4"/>
<ellipse cx="126.3" cy="41.6" rx="4.2" ry="2.7" fill="#cd9642"/>
<ellipse cx="152.9" cy="42.4" rx="6" ry="4.9" fill="#a5682a" stroke="#603a17" stroke-width="1.3"/>
<ellipse cx="152.9" cy="41.4" rx="4.5" ry="2.7" fill="#b9802f"/>
<ellipse cx="151.1" cy="40.9" rx="1.9" ry="1.6" fill="#3f9a3a"/>
<ellipse cx="154.7" cy="41.4" rx="1.7" ry="1.4" fill="#d43c2d"/>
<ellipse cx="89.5" cy="47" rx="2.5" ry="2.5" fill="#d23b2c" stroke="#7a2a1a" stroke-width="0.8"/>
<ellipse cx="103.8" cy="43.5" rx="1.7" ry="1.7" fill="#d23b2c" stroke="#7a2a1a" stroke-width="0.8"/>
<ellipse cx="111.7" cy="44.9" rx="5.5" ry="4.1" fill="#8595aa" stroke="#9db3cc" stroke-width="0.9"/>
<ellipse cx="111.7" cy="44.9" rx="4.3" ry="3.1" fill="#cfc6b4" stroke="#5b4a30" stroke-width="0.8"/>
<ellipse cx="98.3" cy="50.9" rx="4.9" ry="6.9" fill="#d69a36" stroke="#7c4a1c" stroke-width="1.5"/>
<ellipse cx="97.8" cy="49.8" rx="2.7" ry="3.1" fill="#e6b44c"/>
<ellipse cx="99.6" cy="53.3" rx="2" ry="1.7" fill="#b97b2a"/>
<ellipse cx="141.3" cy="49.8" rx="9.6" ry="6.9" fill="#8595aa" stroke="#9db3cc" stroke-width="0.9"/>
<ellipse cx="141.3" cy="49.8" rx="7.5" ry="5.2" fill="#cf3d2e" stroke="#5b4a30" stroke-width="0.8"/>
<ellipse cx="158.2" cy="51.9" rx="7.7" ry="6" fill="#8595aa" stroke="#9db3cc" stroke-width="0.9"/>
<ellipse cx="158.2" cy="51.9" rx="6" ry="4.6" fill="#dca139" stroke="#5b4a30" stroke-width="0.8"/>
<ellipse cx="118" cy="51.9" rx="3" ry="3" fill="#d23b2c" stroke="#7a2a1a" stroke-width="0.8"/>
<ellipse cx="127.1" cy="55.5" rx="3.2" ry="4.7" fill="#d23b2c" stroke="#7a2a1a" stroke-width="0.8"/>
<ellipse cx="107.4" cy="55.1" rx="3.6" ry="3.6" fill="#8797ab" stroke="#9fb4cc" stroke-width="0.7"/>
<ellipse cx="107.4" cy="55.1" rx="2.2" ry="2.2" fill="#d2ccc0" stroke="#8a7a60" stroke-width="0.6"/>
<ellipse cx="90.5" cy="58.7" rx="2.5" ry="1.7" fill="#8a5a26" stroke="#5a3515" stroke-width="0.8"/>
<ellipse cx="90.5" cy="57.9" rx="2.2" ry="1.5" fill="#3c8c38" stroke="#27591f" stroke-width="0.8"/>
<ellipse cx="90.5" cy="54.7" rx="2.7" ry="2.2" fill="#b47a30" stroke="#683d17" stroke-width="1.4"/>
<ellipse cx="90.2" cy="54.2" rx="1.5" ry="1" fill="#cd9642"/>
<ellipse cx="84.2" cy="65.7" rx="7.7" ry="6" fill="#8595aa" stroke="#9db3cc" stroke-width="0.9"/>
<ellipse cx="84.2" cy="65.7" rx="6" ry="4.6" fill="#3f963a" stroke="#5b4a30" stroke-width="0.8"/>
<ellipse cx="106.4" cy="68.8" rx="15.1" ry="8.8" fill="#8595aa" stroke="#9db3cc" stroke-width="0.9"/>
<ellipse cx="106.4" cy="68.8" rx="11.8" ry="6.7" fill="#dca139" stroke="#5b4a30" stroke-width="0.8"/>
<ellipse cx="138.1" cy="62.5" rx="8.2" ry="8.2" fill="#d69a36" stroke="#7c4a1c" stroke-width="1.5"/>
<ellipse cx="137.3" cy="61.2" rx="4.5" ry="3.7" fill="#e6b44c"/>
<ellipse cx="140.1" cy="65.4" rx="3.3" ry="2.1" fill="#b97b2a"/>
<ellipse cx="153.9" cy="64.6" rx="8.2" ry="6.9" fill="#d69a36" stroke="#7c4a1c" stroke-width="1.5"/>
<ellipse cx="153.1" cy="63.6" rx="4.5" ry="3.1" fill="#e6b44c"/>
<ellipse cx="156" cy="67" rx="3.3" ry="1.7" fill="#b97b2a"/>
<ellipse cx="121.2" cy="63.5" rx="2.1" ry="3.2" fill="#d23b2c" stroke="#7a2a1a" stroke-width="0.8"/>
<ellipse cx="126.5" cy="74.1" rx="4.9" ry="4.9" fill="#b47a30" stroke="#683d17" stroke-width="1.4"/>
<ellipse cx="126" cy="73.1" rx="2.7" ry="2.2" fill="#cd9642"/>
<ellipse cx="133.9" cy="75.2" rx="4.1" ry="4.9" fill="#b47a30" stroke="#683d17" stroke-width="1.4"/>
<ellipse cx="133.4" cy="74.2" rx="2.3" ry="2.2" fill="#cd9642"/>
<ellipse cx="145.5" cy="74.5" rx="6.9" ry="5.5" fill="#8595aa" stroke="#9db3cc" stroke-width="0.9"/>
<ellipse cx="145.5" cy="74.5" rx="5.4" ry="4.2" fill="#cf3d2e" stroke="#5b4a30" stroke-width="0.8"/>
<ellipse cx="158.2" cy="76.2" rx="5.5" ry="4.1" fill="#d69a36" stroke="#7c4a1c" stroke-width="1.5"/>
<ellipse cx="157.6" cy="75.6" rx="3" ry="1.9" fill="#e6b44c"/>
<ellipse cx="159.5" cy="77.7" rx="2.2" ry="1" fill="#b97b2a"/>
<ellipse cx="90.5" cy="78.3" rx="2.1" ry="2.1" fill="#d23b2c" stroke="#7a2a1a" stroke-width="0.8"/>
<ellipse cx="83.5" cy="78.3" rx="3.3" ry="3.3" fill="#b47a30" stroke="#683d17" stroke-width="1.4"/>
<ellipse cx="83.2" cy="77.7" rx="1.8" ry="1.5" fill="#cd9642"/>
<ellipse cx="8.6" cy="95.8" rx="11.5" ry="10.4" fill="#d69a36" stroke="#7c4a1c" stroke-width="1.5"/>
<ellipse cx="7.4" cy="94.2" rx="6.3" ry="4.7" fill="#e6b44c"/>
<ellipse cx="11.5" cy="99.5" rx="4.6" ry="2.6" fill="#b97b2a"/>
<ellipse cx="22.3" cy="89" rx="6.9" ry="4.1" fill="#b47a30" stroke="#683d17" stroke-width="1.4"/>
<ellipse cx="21.6" cy="88.2" rx="3.8" ry="1.9" fill="#cd9642"/>
<ellipse cx="48.7" cy="86.3" rx="12.4" ry="8.2" fill="#9c5f27" stroke="#5e3815" stroke-width="1.5"/>
<ellipse cx="48.7" cy="85" rx="9.9" ry="5.4" fill="#b47a2e" stroke="#6b4019" stroke-width="0.8"/>
<ellipse cx="47.5" cy="84.6" rx="5.6" ry="2.9" fill="#c98f3a"/>
<ellipse cx="43.8" cy="83.4" rx="2.5" ry="1.8" fill="#3f9a3a"/>
<ellipse cx="51.8" cy="83.4" rx="2" ry="1.5" fill="#d43c2d"/>
<ellipse cx="54.3" cy="85.9" rx="1.9" ry="1.4" fill="#3f9a3a"/>
<ellipse cx="46.9" cy="85.9" rx="1.6" ry="1.2" fill="#d43c2d"/>
<ellipse cx="68.8" cy="85.2" rx="9.6" ry="6.9" fill="#d69a36" stroke="#7c4a1c" stroke-width="1.5"/>
<ellipse cx="67.9" cy="84.2" rx="5.3" ry="3.1" fill="#e6b44c"/>
<ellipse cx="71.2" cy="87.6" rx="3.8" ry="1.7" fill="#b97b2a"/>
<ellipse cx="33.9" cy="95.5" rx="4.2" ry="3" fill="#8a5a26" stroke="#5a3515" stroke-width="0.8"/>
<ellipse cx="33.9" cy="94.2" rx="3.6" ry="2.7" fill="#3c8c38" stroke="#27591f" stroke-width="0.8"/>
<ellipse cx="23.4" cy="96.2" rx="2.4" ry="2.4" fill="#8797ab" stroke="#9fb4cc" stroke-width="0.7"/>
<ellipse cx="23.4" cy="96.2" rx="1.5" ry="1.5" fill="#d2ccc0" stroke="#8a7a60" stroke-width="0.6"/>
<ellipse cx="58.3" cy="99" rx="8.2" ry="6.9" fill="#8595aa" stroke="#9db3cc" stroke-width="0.9"/>
<ellipse cx="58.3" cy="99" rx="6.4" ry="5.2" fill="#cfc6b4" stroke="#5b4a30" stroke-width="0.8"/>
<ellipse cx="74.1" cy="99" rx="8.2" ry="6" fill="#b47a30" stroke="#683d17" stroke-width="1.4"/>
<ellipse cx="73.3" cy="97.8" rx="4.5" ry="2.7" fill="#cd9642"/>
<ellipse cx="46.2" cy="102.2" rx="3.2" ry="2" fill="#8a5a26" stroke="#5a3515" stroke-width="0.8"/>
<ellipse cx="46.2" cy="101.3" rx="2.7" ry="1.8" fill="#3c8c38" stroke="#27591f" stroke-width="0.8"/>
<ellipse cx="26.5" cy="106.4" rx="2.5" ry="2.5" fill="#d23b2c" stroke="#7a2a1a" stroke-width="0.8"/>
<ellipse cx="36.1" cy="104.7" rx="2.1" ry="2.1" fill="#d23b2c" stroke="#7a2a1a" stroke-width="0.8"/>
<ellipse cx="17.5" cy="111.7" rx="4.9" ry="5.5" fill="#b47a30" stroke="#683d17" stroke-width="1.4"/>
<ellipse cx="17" cy="110.6" rx="2.7" ry="2.5" fill="#cd9642"/>
<ellipse cx="52.5" cy="110.6" rx="8.2" ry="4.1" fill="#b47a30" stroke="#683d17" stroke-width="1.4"/>
<ellipse cx="51.7" cy="109.8" rx="4.5" ry="1.9" fill="#cd9642"/>
<ellipse cx="64.6" cy="112.4" rx="4.2" ry="3" fill="#8a5a26" stroke="#5a3515" stroke-width="0.8"/>
<ellipse cx="64.6" cy="111.1" rx="3.6" ry="2.7" fill="#3c8c38" stroke="#27591f" stroke-width="0.8"/>
<ellipse cx="79.4" cy="112.7" rx="8.2" ry="11" fill="#b47a30" stroke="#683d17" stroke-width="1.4"/>
<ellipse cx="78.6" cy="110.5" rx="4.5" ry="4.9" fill="#cd9642"/>
<ellipse cx="42" cy="116.5" rx="3.8" ry="3.2" fill="#d23b2c" stroke="#7a2a1a" stroke-width="0.8"/>
<ellipse cx="56.1" cy="119.7" rx="2.5" ry="2.5" fill="#d23b2c" stroke="#7a2a1a" stroke-width="0.8"/>
<ellipse cx="1.8" cy="112.7" rx="4.1" ry="6.9" fill="#b47a30" stroke="#683d17" stroke-width="1.4"/>
<ellipse cx="1.4" cy="111.3" rx="2.3" ry="3.1" fill="#cd9642"/>
<ellipse cx="27.6" cy="121.2" rx="9.6" ry="7.7" fill="#b47a30" stroke="#683d17" stroke-width="1.4"/>
<ellipse cx="26.6" cy="119.6" rx="5.3" ry="3.5" fill="#cd9642"/>
<ellipse cx="67.8" cy="126.5" rx="8.8" ry="10.4" fill="#d69a36" stroke="#7c4a1c" stroke-width="1.5"/>
<ellipse cx="66.9" cy="124.9" rx="4.8" ry="4.7" fill="#e6b44c"/>
<ellipse cx="70" cy="130.1" rx="3.5" ry="2.6" fill="#b97b2a"/>
<ellipse cx="2.2" cy="125.4" rx="4.1" ry="6.9" fill="#b47a30" stroke="#683d17" stroke-width="1.4"/>
<ellipse cx="1.8" cy="124" rx="2.3" ry="3.1" fill="#cd9642"/>
<ellipse cx="10.3" cy="126.5" rx="4.1" ry="6.9" fill="#b47a30" stroke="#683d17" stroke-width="1.4"/>
<ellipse cx="9.8" cy="125.1" rx="2.3" ry="3.1" fill="#cd9642"/>
<ellipse cx="44.5" cy="125" rx="3.6" ry="2.9" fill="#8797ab" stroke="#9fb4cc" stroke-width="0.7"/>
<ellipse cx="44.5" cy="125" rx="2.2" ry="1.8" fill="#d2ccc0" stroke="#8a7a60" stroke-width="0.6"/>
<ellipse cx="36.1" cy="131.6" rx="4.7" ry="3.7" fill="#8a5a26" stroke="#5a3515" stroke-width="0.8"/>
<ellipse cx="36.1" cy="130" rx="4" ry="3.3" fill="#3c8c38" stroke="#27591f" stroke-width="0.8"/>
<ellipse cx="54" cy="129.6" rx="4.1" ry="4.9" fill="#8595aa" stroke="#9db3cc" stroke-width="0.9"/>
<ellipse cx="54" cy="129.6" rx="3.2" ry="3.8" fill="#cfc6b4" stroke="#5b4a30" stroke-width="0.8"/>
<ellipse cx="23.4" cy="134.9" rx="9.6" ry="8.2" fill="#b47a30" stroke="#683d17" stroke-width="1.4"/>
<ellipse cx="22.4" cy="133.3" rx="5.3" ry="3.7" fill="#cd9642"/>
<ellipse cx="6" cy="136.4" rx="3.6" ry="2.9" fill="#8797ab" stroke="#9fb4cc" stroke-width="0.7"/>
<ellipse cx="6" cy="136.4" rx="2.2" ry="1.8" fill="#d2ccc0" stroke="#8a7a60" stroke-width="0.6"/>
<ellipse cx="49.8" cy="143.4" rx="11.5" ry="11" fill="#d69a36" stroke="#7c4a1c" stroke-width="1.5"/>
<ellipse cx="48.6" cy="141.7" rx="6.3" ry="4.9" fill="#e6b44c"/>
<ellipse cx="52.7" cy="147.2" rx="4.6" ry="2.7" fill="#b97b2a"/>
<ellipse cx="12.4" cy="144" rx="5.5" ry="4.9" fill="#8595aa" stroke="#9db3cc" stroke-width="0.9"/>
<ellipse cx="12.4" cy="144" rx="4.3" ry="3.8" fill="#cfc6b4" stroke="#5b4a30" stroke-width="0.8"/>
<ellipse cx="65.7" cy="144.4" rx="4.9" ry="6.9" fill="#b47a30" stroke="#683d17" stroke-width="1.4"/>
<ellipse cx="65.2" cy="143.1" rx="2.7" ry="3.1" fill="#cd9642"/>
<ellipse cx="31.8" cy="142.7" rx="3.3" ry="3.3" fill="#b47a30" stroke="#683d17" stroke-width="1.4"/>
<ellipse cx="31.5" cy="142.1" rx="1.8" ry="1.5" fill="#cd9642"/>
<ellipse cx="37.1" cy="143.4" rx="2.2" ry="2.2" fill="#b47a30" stroke="#683d17" stroke-width="1.4"/>
<ellipse cx="36.9" cy="142.9" rx="1.2" ry="1" fill="#cd9642"/>
<ellipse cx="24.4" cy="149.7" rx="5.5" ry="6.9" fill="#d69a36" stroke="#7c4a1c" stroke-width="1.5"/>
<ellipse cx="23.9" cy="148.7" rx="3" ry="3.1" fill="#e6b44c"/>
<ellipse cx="25.8" cy="152.1" rx="2.2" ry="1.7" fill="#b97b2a"/>
<ellipse cx="12.4" cy="155" rx="8.2" ry="6" fill="#8595aa" stroke="#9db3cc" stroke-width="0.9"/>
<ellipse cx="12.4" cy="155" rx="6.4" ry="4.6" fill="#a86b2b" stroke="#5b4a30" stroke-width="0.8"/>
<ellipse cx="37.1" cy="153.9" rx="6.9" ry="6" fill="#d69a36" stroke="#7c4a1c" stroke-width="1.5"/>
<ellipse cx="36.4" cy="153" rx="3.8" ry="2.7" fill="#e6b44c"/>
<ellipse cx="38.8" cy="156.1" rx="2.7" ry="1.5" fill="#b97b2a"/>
<ellipse cx="61.4" cy="158.2" rx="12.4" ry="8.8" fill="#9c5f27" stroke="#5e3815" stroke-width="1.5"/>
<ellipse cx="61.4" cy="156.8" rx="9.9" ry="5.7" fill="#b47a2e" stroke="#6b4019" stroke-width="0.8"/>
<ellipse cx="60.2" cy="156.4" rx="5.6" ry="3.1" fill="#c98f3a"/>
<ellipse cx="56.5" cy="155.1" rx="2.5" ry="1.9" fill="#3f9a3a"/>
<ellipse cx="64.5" cy="155.1" rx="2" ry="1.6" fill="#d43c2d"/>
<ellipse cx="67" cy="157.7" rx="1.9" ry="1.5" fill="#3f9a3a"/>
<ellipse cx="59.6" cy="157.7" rx="1.6" ry="1.3" fill="#d43c2d"/>
<ellipse cx="2.2" cy="161.3" rx="2.1" ry="1.7" fill="#8a5a26" stroke="#5a3515" stroke-width="0.8"/>
<ellipse cx="2.2" cy="160.6" rx="1.8" ry="1.5" fill="#3c8c38" stroke="#27591f" stroke-width="0.8"/>
<ellipse cx="79.4" cy="150.8" rx="6.9" ry="8.2" fill="#8595aa" stroke="#9db3cc" stroke-width="0.9"/>
<ellipse cx="79.4" cy="150.8" rx="5.4" ry="6.3" fill="#cf3d2e" stroke="#5b4a30" stroke-width="0.8"/>
<ellipse cx="23.4" cy="162.4" rx="6.9" ry="4.1" fill="#b47a30" stroke="#683d17" stroke-width="1.4"/>
<ellipse cx="22.7" cy="161.6" rx="3.8" ry="1.9" fill="#cd9642"/>
<ellipse cx="36.1" cy="162.4" rx="5.5" ry="3.3" fill="#a5682a" stroke="#603a17" stroke-width="1.3"/>
<ellipse cx="36.1" cy="161.7" rx="4.1" ry="1.8" fill="#b9802f"/>
<ellipse cx="34.4" cy="161.4" rx="1.8" ry="1.1" fill="#3f9a3a"/>
<ellipse cx="37.7" cy="161.7" rx="1.5" ry="0.9" fill="#d43c2d"/>
<ellipse cx="72" cy="148" rx="1.7" ry="1.7" fill="#8a5a26" stroke="#5a3515" stroke-width="0.8"/>
<ellipse cx="72" cy="147.3" rx="1.4" ry="1.5" fill="#3c8c38" stroke="#27591f" stroke-width="0.8"/>
<ellipse cx="89.5" cy="84.2" rx="5.5" ry="4.1" fill="#b47a30" stroke="#683d17" stroke-width="1.4"/>
<ellipse cx="88.9" cy="83.3" rx="3" ry="1.9" fill="#cd9642"/>
<ellipse cx="104.3" cy="84.8" rx="6.9" ry="4.9" fill="#8595aa" stroke="#9db3cc" stroke-width="0.9"/>
<ellipse cx="104.3" cy="84.8" rx="5.4" ry="3.8" fill="#cf3d2e" stroke="#5b4a30" stroke-width="0.8"/>
<ellipse cx="116.9" cy="82.7" rx="3.6" ry="1.9" fill="#8797ab" stroke="#9fb4cc" stroke-width="0.7"/>
<ellipse cx="116.9" cy="82.7" rx="2.2" ry="1.2" fill="#d2ccc0" stroke="#8a7a60" stroke-width="0.6"/>
<ellipse cx="133.9" cy="86.9" rx="13.7" ry="8.8" fill="#9c5f27" stroke="#5e3815" stroke-width="1.5"/>
<ellipse cx="133.9" cy="85.6" rx="11" ry="5.7" fill="#b47a2e" stroke="#6b4019" stroke-width="0.8"/>
<ellipse cx="132.5" cy="85.2" rx="6.2" ry="3.1" fill="#c98f3a"/>
<ellipse cx="128.4" cy="83.8" rx="2.7" ry="1.9" fill="#3f9a3a"/>
<ellipse cx="137.3" cy="83.8" rx="2.2" ry="1.6" fill="#d43c2d"/>
<ellipse cx="140" cy="86.5" rx="2.1" ry="1.5" fill="#3f9a3a"/>
<ellipse cx="131.8" cy="86.5" rx="1.8" ry="1.3" fill="#d43c2d"/>
<ellipse cx="150.8" cy="84.2" rx="4.9" ry="4.1" fill="#a5682a" stroke="#603a17" stroke-width="1.3"/>
<ellipse cx="150.8" cy="83.3" rx="3.7" ry="2.3" fill="#b9802f"/>
<ellipse cx="149.3" cy="82.9" rx="1.6" ry="1.3" fill="#3f9a3a"/>
<ellipse cx="152.3" cy="83.3" rx="1.4" ry="1.2" fill="#d43c2d"/>
<ellipse cx="160.9" cy="85.7" rx="3.2" ry="2" fill="#8a5a26" stroke="#5a3515" stroke-width="0.8"/>
<ellipse cx="160.9" cy="84.8" rx="2.7" ry="1.8" fill="#3c8c38" stroke="#27591f" stroke-width="0.8"/>
<ellipse cx="87.3" cy="94.7" rx="6" ry="7.7" fill="#b47a30" stroke="#683d17" stroke-width="1.4"/>
<ellipse cx="86.7" cy="93.2" rx="3.3" ry="3.5" fill="#cd9642"/>
<ellipse cx="116.9" cy="89.9" rx="4.9" ry="4.9" fill="#b47a30" stroke="#683d17" stroke-width="1.4"/>
<ellipse cx="116.4" cy="88.9" rx="2.7" ry="2.2" fill="#cd9642"/>
<ellipse cx="104.3" cy="100" rx="13.2" ry="11" fill="#8595aa" stroke="#9db3cc" stroke-width="0.9"/>
<ellipse cx="104.3" cy="100" rx="10.3" ry="8.4" fill="#dca139" stroke="#5b4a30" stroke-width="0.8"/>
<ellipse cx="125.4" cy="98.3" rx="7.7" ry="5.5" fill="#8595aa" stroke="#9db3cc" stroke-width="0.9"/>
<ellipse cx="125.4" cy="98.3" rx="6" ry="4.2" fill="#cf3d2e" stroke="#5b4a30" stroke-width="0.8"/>
<ellipse cx="142.3" cy="103.8" rx="12.4" ry="9.6" fill="#b47a30" stroke="#683d17" stroke-width="1.4"/>
<ellipse cx="141.1" cy="101.9" rx="6.8" ry="4.3" fill="#cd9642"/>
<ellipse cx="157.1" cy="94.1" rx="5.5" ry="4.9" fill="#8595aa" stroke="#9db3cc" stroke-width="0.9"/>
<ellipse cx="157.1" cy="94.1" rx="4.3" ry="3.8" fill="#cfc6b4" stroke="#5b4a30" stroke-width="0.8"/>
<ellipse cx="160.3" cy="105.3" rx="6" ry="5.5" fill="#b47a30" stroke="#683d17" stroke-width="1.4"/>
<ellipse cx="159.7" cy="104.2" rx="3.3" ry="2.5" fill="#cd9642"/>
<ellipse cx="86.3" cy="112.7" rx="12.4" ry="9.6" fill="#9c5f27" stroke="#5e3815" stroke-width="1.5"/>
<ellipse cx="86.3" cy="111.3" rx="9.9" ry="6.3" fill="#b47a2e" stroke="#6b4019" stroke-width="0.8"/>
<ellipse cx="85" cy="110.8" rx="5.6" ry="3.4" fill="#c98f3a"/>
<ellipse cx="81.3" cy="109.3" rx="2.5" ry="2.1" fill="#3f9a3a"/>
<ellipse cx="89.4" cy="109.3" rx="2" ry="1.7" fill="#d43c2d"/>
<ellipse cx="91.9" cy="112.2" rx="1.9" ry="1.6" fill="#3f9a3a"/>
<ellipse cx="84.4" cy="112.2" rx="1.6" ry="1.4" fill="#d43c2d"/>
<ellipse cx="107.4" cy="115.9" rx="7.7" ry="6" fill="#8595aa" stroke="#9db3cc" stroke-width="0.9"/>
<ellipse cx="107.4" cy="115.9" rx="6" ry="4.6" fill="#3f963a" stroke="#5b4a30" stroke-width="0.8"/>
<ellipse cx="127.5" cy="114.8" rx="11" ry="8.8" fill="#b47a30" stroke="#683d17" stroke-width="1.4"/>
<ellipse cx="126.4" cy="113.1" rx="6" ry="4" fill="#cd9642"/>
<ellipse cx="147" cy="120.1" rx="8.8" ry="8.2" fill="#d69a36" stroke="#7c4a1c" stroke-width="1.5"/>
<ellipse cx="146.1" cy="118.9" rx="4.8" ry="3.7" fill="#e6b44c"/>
<ellipse cx="149.2" cy="123" rx="3.5" ry="2.1" fill="#b97b2a"/>
<ellipse cx="161.3" cy="119.1" rx="6" ry="9.6" fill="#b47a30" stroke="#683d17" stroke-width="1.4"/>
<ellipse cx="160.7" cy="117.1" rx="3.3" ry="4.3" fill="#cd9642"/>
<ellipse cx="93.7" cy="131.7" rx="19.2" ry="12.4" fill="#9c5f27" stroke="#5e3815" stroke-width="1.5"/>
<ellipse cx="93.7" cy="129.9" rx="15.4" ry="8" fill="#b47a2e" stroke="#6b4019" stroke-width="0.8"/>
<ellipse cx="91.8" cy="129.3" rx="8.7" ry="4.3" fill="#c98f3a"/>
<ellipse cx="86" cy="127.4" rx="3.8" ry="2.7" fill="#3f9a3a"/>
<ellipse cx="98.5" cy="127.4" rx="3.1" ry="2.2" fill="#d43c2d"/>
<ellipse cx="102.3" cy="131.1" rx="2.9" ry="2.1" fill="#3f9a3a"/>
<ellipse cx="90.8" cy="131.1" rx="2.5" ry="1.9" fill="#d43c2d"/>
<ellipse cx="116.9" cy="123.9" rx="4.9" ry="3.3" fill="#8595aa" stroke="#9db3cc" stroke-width="0.9"/>
<ellipse cx="116.9" cy="123.9" rx="3.9" ry="2.5" fill="#cfc6b4" stroke="#5b4a30" stroke-width="0.8"/>
<ellipse cx="131.3" cy="130.7" rx="10.4" ry="8.8" fill="#b47a30" stroke="#683d17" stroke-width="1.4"/>
<ellipse cx="130.3" cy="128.9" rx="5.7" ry="4" fill="#cd9642"/>
<ellipse cx="119.1" cy="131.3" rx="2.1" ry="2.1" fill="#d23b2c" stroke="#7a2a1a" stroke-width="0.8"/>
<ellipse cx="118.6" cy="138.1" rx="4.9" ry="4.1" fill="#8595aa" stroke="#9db3cc" stroke-width="0.9"/>
<ellipse cx="118.6" cy="138.1" rx="3.9" ry="3.1" fill="#cfc6b4" stroke="#5b4a30" stroke-width="0.8"/>
<ellipse cx="144.4" cy="131.2" rx="2.1" ry="2" fill="#8a5a26" stroke="#5a3515" stroke-width="0.8"/>
<ellipse cx="144.4" cy="130.3" rx="1.8" ry="1.8" fill="#3c8c38" stroke="#27591f" stroke-width="0.8"/>
<ellipse cx="142.3" cy="135.5" rx="5.5" ry="3.3" fill="#8595aa" stroke="#9db3cc" stroke-width="0.9"/>
<ellipse cx="142.3" cy="135.5" rx="4.3" ry="2.5" fill="#cfc6b4" stroke="#5b4a30" stroke-width="0.8"/>
<ellipse cx="156.1" cy="132.8" rx="7.7" ry="6" fill="#a5682a" stroke="#603a17" stroke-width="1.3"/>
<ellipse cx="156.1" cy="131.6" rx="5.8" ry="3.3" fill="#b9802f"/>
<ellipse cx="153.7" cy="131" rx="2.5" ry="1.9" fill="#3f9a3a"/>
<ellipse cx="158.4" cy="131.6" rx="2.2" ry="1.7" fill="#d43c2d"/>
<ellipse cx="111" cy="138.5" rx="1.7" ry="1.7" fill="#d23b2c" stroke="#7a2a1a" stroke-width="0.8"/>
<ellipse cx="85.2" cy="148.7" rx="7.7" ry="6" fill="#8595aa" stroke="#9db3cc" stroke-width="0.9"/>
<ellipse cx="85.2" cy="148.7" rx="6" ry="4.6" fill="#cf3d2e" stroke="#5b4a30" stroke-width="0.8"/>
<ellipse cx="101.1" cy="147.6" rx="4.2" ry="2.5" fill="#8a5a26" stroke="#5a3515" stroke-width="0.8"/>
<ellipse cx="101.1" cy="146.5" rx="3.6" ry="2.2" fill="#3c8c38" stroke="#27591f" stroke-width="0.8"/>
<ellipse cx="112.7" cy="148.7" rx="8.2" ry="4.9" fill="#b47a30" stroke="#683d17" stroke-width="1.4"/>
<ellipse cx="111.9" cy="147.7" rx="4.5" ry="2.2" fill="#cd9642"/>
<ellipse cx="127.9" cy="145.5" rx="8.2" ry="6.9" fill="#a5682a" stroke="#603a17" stroke-width="1.3"/>
<ellipse cx="127.9" cy="144.1" rx="6.2" ry="3.8" fill="#b9802f"/>
<ellipse cx="125.5" cy="143.4" rx="2.6" ry="2.2" fill="#3f9a3a"/>
<ellipse cx="130.4" cy="144.1" rx="2.3" ry="1.9" fill="#d43c2d"/>
<ellipse cx="143.4" cy="142.3" rx="7.7" ry="4.9" fill="#8595aa" stroke="#9db3cc" stroke-width="0.9"/>
<ellipse cx="143.4" cy="142.3" rx="6" ry="3.8" fill="#a86b2b" stroke="#5b4a30" stroke-width="0.8"/>
<ellipse cx="157.5" cy="143.4" rx="7.7" ry="4.1" fill="#8595aa" stroke="#9db3cc" stroke-width="0.9"/>
<ellipse cx="157.5" cy="143.4" rx="6" ry="3.1" fill="#cf3d2e" stroke="#5b4a30" stroke-width="0.8"/>
<ellipse cx="150.3" cy="150.3" rx="1.7" ry="2.5" fill="#8a5a26" stroke="#5a3515" stroke-width="0.8"/>
<ellipse cx="150.3" cy="149.2" rx="1.4" ry="2.2" fill="#3c8c38" stroke="#27591f" stroke-width="0.8"/>
<ellipse cx="160.3" cy="153.9" rx="9.6" ry="9.6" fill="#9c5f27" stroke="#5e3815" stroke-width="1.5"/>
<ellipse cx="160.3" cy="152.5" rx="7.7" ry="6.3" fill="#b47a2e" stroke="#6b4019" stroke-width="0.8"/>
<ellipse cx="159.3" cy="152" rx="4.3" ry="3.4" fill="#c98f3a"/>
<ellipse cx="156.4" cy="150.6" rx="1.9" ry="2.1" fill="#3f9a3a"/>
<ellipse cx="162.7" cy="150.6" rx="1.5" ry="1.7" fill="#d43c2d"/>
<ellipse cx="164.6" cy="153.5" rx="1.4" ry="1.6" fill="#3f9a3a"/>
<ellipse cx="158.8" cy="153.5" rx="1.3" ry="1.4" fill="#d43c2d"/>
<ellipse cx="96.9" cy="159.2" rx="8.8" ry="6.9" fill="#d69a36" stroke="#7c4a1c" stroke-width="1.5"/>
<ellipse cx="96" cy="158.2" rx="4.8" ry="3.1" fill="#e6b44c"/>
<ellipse cx="99.1" cy="161.6" rx="3.5" ry="1.7" fill="#b97b2a"/>
<ellipse cx="112.7" cy="159.2" rx="6" ry="5.5" fill="#8595aa" stroke="#9db3cc" stroke-width="0.9"/>
<ellipse cx="112.7" cy="159.2" rx="4.7" ry="4.2" fill="#cf3d2e" stroke="#5b4a30" stroke-width="0.8"/>
<ellipse cx="138.1" cy="156.1" rx="8.2" ry="6.9" fill="#8595aa" stroke="#9db3cc" stroke-width="0.9"/>
<ellipse cx="138.1" cy="156.1" rx="6.4" ry="5.2" fill="#dca139" stroke="#5b4a30" stroke-width="0.8"/>
<ellipse cx="125.4" cy="160.9" rx="3.6" ry="3.6" fill="#8797ab" stroke="#9fb4cc" stroke-width="0.7"/>
<ellipse cx="125.4" cy="160.9" rx="2.2" ry="2.2" fill="#d2ccc0" stroke="#8a7a60" stroke-width="0.6"/>
<ellipse cx="84.2" cy="162.4" rx="4.9" ry="4.1" fill="#b47a30" stroke="#683d17" stroke-width="1.4"/>
<ellipse cx="83.7" cy="161.6" rx="2.7" ry="1.9" fill="#cd9642"/>
</svg>
<div class="abs dlg"></div>
<div class="abs dlgin"></div>
<div class="abs" style="left:386.6px;top:37.3px;width:390.8px;height:1.2px;background:#54575f"></div>
<div class="abs title" style="top:38.5px;height:15.7px"></div>
<div class="abs" style="left:386.6px;top:37.3px;width:1.2px;height:16.6px;background:#54575f"></div>
<div class="abs" style="left:776.2px;top:37.3px;width:1.2px;height:16.6px;background:#54575f"></div>
<div class="abs" style="left:386.6px;top:53.9px;width:1.7px;height:294px;background:#33353b"></div>
<div class="abs" style="left:775.8px;top:53.9px;width:1.6px;height:294px;background:#34363c"></div>
<div class="abs" style="left:386.6px;top:347.4px;width:390.8px;height:1.2px;background:#383a41"></div>
<div class="abs" style="left:386.6px;top:348.6px;width:390.8px;height:3.1px;background:#2f3137"></div>

<!-- close button -->
<div class="abs" style="left:763.1px;top:40.2px;width:11.7px;height:12.6px;background:#000;border-radius:2.5px"></div>
<div class="abs" style="left:764.4px;top:41.5px;width:9.1px;height:9.2px;background:#2b2c31;border-radius:1.5px"></div>
<svg class="abs" style="left:764.4px;top:41.5px" width="9.1" height="9.2" viewBox="0 0 9.1 9.2"><path d="M1.2 1.2 L7.6 7.4 M7.6 1.2 L1.2 7.4" stroke="#d4d4d4" stroke-width="1" fill="none"/></svg>

<span class="t" style="left:390.9px;top:39.3px;letter-spacing:0.41px">Local AI Generator</span>
<span class="t" style="left:442.3px;top:56.3px;letter-spacing:0.39px">Status: Online - stabilityai/stable-diffusion-xl-base-1.0</span>

<div class="abs btn" style="left:442.1px;top:74.7px;width:328.6px;height:20.2px"><i></i></div>
<span class="t" style="left:552.9px;top:76.5px;letter-spacing:0.29px">Refresh Connection</span>

<svg class="abs" style="left:393.5px;top:104.2px" width="378" height="2" viewBox="0 0 378 2"><line x1="0" y1="0.8" x2="377.3" y2="0.8" stroke="#1d1e22" stroke-width="1.5" stroke-dasharray="1.5 2.37"/></svg>

<span class="t" style="left:393.3px;top:110.1px;letter-spacing:0.45px">Prompt:</span>
<div class="abs inp" style="left:444.3px;top:113.6px;width:324.4px;height:15.8px"><i></i><b></b></div>
<span class="t" style="left:446.0px;top:114.5px;letter-spacing:0.71px">pixel art, food item, colorful, appetizing</span>

<span class="t" style="left:393.4px;top:134.9px;letter-spacing:0.11px">Presets:</span>
<div class="abs inp focus" style="left:443.2px;top:137.6px;width:307.2px;height:18.4px;border-radius:4px"><i style="left:1.5px;top:1.5px;right:1.5px;bottom:1.5px"></i><b style="left:2.8px;top:2.8px;right:2.8px;bottom:2.8px"></b></div>
<div class="abs" style="left:446.8px;top:142.6px;width:219px;height:9.6px;background:#e9b84c"></div>
<span class="t" style="left:446.0px;top:138.9px;letter-spacing:0.71px;color:#2a2b30">pixel art, food item, colorful, appetizing</span>
<div class="abs btn dd" style="left:752.2px;top:136.8px;width:17.8px;height:18.7px"><i style="border-color:#3a3c42"></i></div>
<svg class="abs" style="left:754px;top:141.7px" width="14" height="9" viewBox="0 0 14 9"><path d="M1 1.4 H13.2 L7.1 7.9 Z" fill="#d2d2d2"/></svg>

<span class="t" style="left:393.3px;top:160.6px;letter-spacing:0.11px">Size:</span>
<div class="abs inp" style="left:444.3px;top:163.6px;width:309px;height:17.4px"><i></i><b></b></div>
<span class="t" style="left:446.0px;top:165.8px;letter-spacing:0.12px">Medium (128x128)</span>
<div class="abs btn dd" style="left:752.2px;top:163px;width:17.8px;height:18.7px"><i style="border-color:#3a3c42"></i></div>
<svg class="abs" style="left:754px;top:167.7px" width="14" height="9" viewBox="0 0 14 9"><path d="M1 1.4 H13.2 L7.1 7.9 Z" fill="#d2d2d2"/></svg>

<span class="t" style="left:393.3px;top:186.1px;letter-spacing:-0.07px">Colors:</span>
<div class="abs inp" style="left:444.3px;top:189.7px;width:324.4px;height:15.5px"><i></i><b></b></div>
<span class="t" style="left:446.2px;top:190.1px;letter-spacing:-0.75px">16</span>

<div class="abs" style="left:445px;top:215.7px;width:7.8px;height:7.8px;border:1px solid #33343a;box-sizing:border-box;background:#2b2c31;border-radius:1px"></div>
<span class="t" style="left:458.9px;top:213.0px;letter-spacing:0.45px">Remove Background</span>

<span class="t" style="left:393.3px;top:231.1px;letter-spacing:0.30px">Output:</span>
<div class="abs inp" style="left:444.3px;top:234.3px;width:309px;height:17.3px"><i></i><b></b></div>
<span class="t" style="left:446.0px;top:236.3px;letter-spacing:0.46px">New Layer</span>
<div class="abs btn dd" style="left:752.2px;top:233.7px;width:17.8px;height:18.7px"><i style="border-color:#3a3c42"></i></div>
<svg class="abs" style="left:754px;top:238.4px" width="14" height="9" viewBox="0 0 14 9"><path d="M1 1.4 H13.2 L7.1 7.9 Z" fill="#d2d2d2"/></svg>

<svg class="abs" style="left:393.5px;top:261.7px" width="378" height="2" viewBox="0 0 378 2"><line x1="0" y1="0.8" x2="377.3" y2="0.8" stroke="#1d1e22" stroke-width="1.5" stroke-dasharray="1.5 2.37"/></svg>

<div class="abs btn" style="left:442.1px;top:269.2px;width:160.6px;height:20.2px"><i></i></div>
<span class="t" style="left:483.6px;top:271.3px;letter-spacing:0.18px">Model Settings</span>
<div class="abs btn" style="left:608.2px;top:269.2px;width:162.5px;height:20.2px"><i></i></div>
<span class="t" style="left:639.1px;top:271.3px;letter-spacing:0.38px">Advanced Settings</span>

<svg class="abs" style="left:393.5px;top:298.5px" width="378" height="2" viewBox="0 0 378 2"><line x1="0" y1="0.8" x2="377.3" y2="0.8" stroke="#1d1e22" stroke-width="1.5" stroke-dasharray="1.5 2.37"/></svg>

<span class="t" style="left:442.1px;top:305.0px;letter-spacing:0.55px">Ready to generate</span>
<div class="abs btn" style="left:442.1px;top:323.8px;width:160.6px;height:20.2px"><i></i></div>
<span class="t" style="left:478.4px;top:325.4px;letter-spacing:0.31px">Generate Image</span>
<div class="abs btn" style="left:608.2px;top:323.8px;width:162.5px;height:20.2px"><i></i></div>
<span class="t" style="left:675.1px;top:325.2px;letter-spacing:-0.18px">Close</span>
</body>
</html>
